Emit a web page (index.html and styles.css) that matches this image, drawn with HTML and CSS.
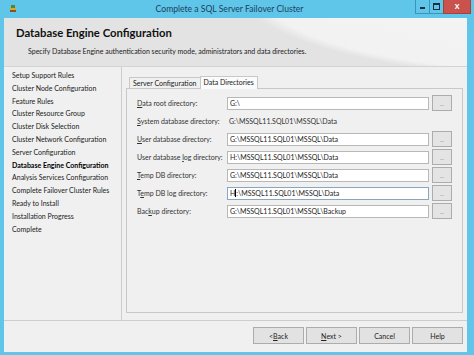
FILE: index.html
```html
<!DOCTYPE html>
<html lang="en">
<head>
  <meta charset="UTF-8">
  <title>Complete a SQL Server Failover Cluster</title>
  <link rel="stylesheet" href="styles.css">
</head>
<body>
  <div class="window">
    <div class="titlebar">
      <svg class="app-icon" width="8" height="9" viewBox="0 0 8 9">
        <rect x="1" y="3" width="6" height="5" fill="#d8a640"/>
        <rect x="2" y="1" width="4" height="3" fill="#4a8a3c"/>
        <rect x="1" y="6" width="6" height="2" fill="#7a5a20"/>
      </svg>
      <div class="title">Complete a SQL Server Failover Cluster</div>
      <div class="caption-buttons">
        <div class="cap-btn"><span class="glyph-min"></span></div>
        <div class="cap-btn"><span class="glyph-max"></span></div>
        <div class="cap-btn close">x</div>
      </div>
    </div>

    <div class="client">
      <div class="header">
        <div class="header-title">Database Engine Configuration</div>
        <div class="header-sub">Specify Database Engine authentication security mode, administrators and data directories.</div>
      </div>

      <div class="main">
        <div class="nav">
          <div class="nav-item">Setup Support Rules</div>
          <div class="nav-item">Cluster Node Configuration</div>
          <div class="nav-item">Feature Rules</div>
          <div class="nav-item">Cluster Resource Group</div>
          <div class="nav-item">Cluster Disk Selection</div>
          <div class="nav-item">Cluster Network Configuration</div>
          <div class="nav-item">Server Configuration</div>
          <div class="nav-item active">Database Engine Configuration</div>
          <div class="nav-item">Analysis Services Configuration</div>
          <div class="nav-item">Complete Failover Cluster Rules</div>
          <div class="nav-item">Ready to Install</div>
          <div class="nav-item">Installation Progress</div>
          <div class="nav-item">Complete</div>
        </div>

        <div class="content">
          <div class="tabs">
            <div class="tab">Server Configuration</div>
            <div class="tab selected">Data Directories</div>
          </div>
          <div class="panel">
            <div class="row">
              <div class="label"><u>D</u>ata root directory:</div>
              <div class="field">G:\</div>
              <div class="browse">...</div>
            </div>
            <div class="row">
              <div class="label"><u>S</u>ystem database directory:</div>
              <div class="value">G:\MSSQL11.SQL01\MSSQL\Data</div>
            </div>
            <div class="row">
              <div class="label"><u>U</u>ser database directory:</div>
              <div class="field">G:\MSSQL11.SQL01\MSSQL\Data</div>
              <div class="browse">...</div>
            </div>
            <div class="row">
              <div class="label">User database <u>l</u>og directory:</div>
              <div class="field">H:\MSSQL11.SQL01\MSSQL\Data</div>
              <div class="browse">...</div>
            </div>
            <div class="row">
              <div class="label"><u>T</u>emp DB directory:</div>
              <div class="field">G:\MSSQL11.SQL01\MSSQL\Data</div>
              <div class="browse">...</div>
            </div>
            <div class="row">
              <div class="label">T<u>e</u>mp DB log directory:</div>
              <div class="field focused">H<span class="caret"></span>:\MSSQL11.SQL01\MSSQL\Data</div>
              <div class="browse">...</div>
            </div>
            <div class="row">
              <div class="label">Bac<u>k</u>up directory:</div>
              <div class="field">G:\MSSQL11.SQL01\MSSQL\Backup</div>
              <div class="browse">...</div>
            </div>
          </div>
        </div>
      </div>

      <div class="footer">
        <div class="btn">&lt; <u>B</u>ack</div>
        <div class="btn"><u>N</u>ext &gt;</div>
        <div class="btn">Cancel</div>
        <div class="btn">Help</div>
      </div>
    </div>
  </div>
</body>
</html>
```

FILE: styles.css
```css
html,
body {
  margin: 0;
  width: 100%;
  height: 100%;
}

body {
  font-family: Lato, "Liberation Sans", sans-serif;
  color: #1a1a1a;
  background-color: #5fc6ea;
}

.window {
  width: 474px;
  height: 355px;
  box-sizing: border-box;
  padding: 0 7px 3px 4px;
  background-color: #5fc6ea;
  display: flex;
  flex-direction: column;
}

.titlebar {
  height: 18px;
  display: flex;
  align-items: center;
}

.app-icon {
  margin: 0 0 2px 5px;
}

.title {
  flex: 1;
  text-align: center;
  font-size: 8.6px;
  color: #1d3f5e;
  padding-left: 26px;
  padding-bottom: 1px;
  white-space: nowrap;
}

.caption-buttons {
  align-self: flex-start;
  display: flex;
  height: 14px;
  margin-right: -4px;
}

.cap-btn {
  width: 15px;
  height: 14px;
  box-sizing: border-box;
  border: 1px solid #3f93b4;
  border-top: none;
  margin-left: -1px;
  display: flex;
  justify-content: center;
  align-items: center;
}

.glyph-min {
  width: 5px;
  height: 2px;
  background-color: #1d2d3a;
  margin-top: 3px;
}

.glyph-max {
  width: 5px;
  height: 4px;
  border: 1px solid #1d2d3a;
  border-top-width: 2px;
}

.cap-btn.close {
  width: 28px;
  background-color: #c9524c;
  border-color: #a8403a;
  color: #fff;
  font-size: 9px;
  font-weight: bold;
  line-height: 1;
  padding-bottom: 2px;
}

.client {
  flex: 1;
  background-color: #f0f0f0;
  display: flex;
  flex-direction: column;
}

.header {
  height: 49px;
  box-sizing: border-box;
  border-bottom: 1px solid #d4d4d4;
  padding: 8px 0 0 12px;
  white-space: nowrap;
  background:
    radial-gradient(ellipse 326px 89px at 560px -30px, #f5f5f5 0%, #f2f2f2 94%, #e3e3e3 100%),
    linear-gradient(90deg, #dcdcdc 0%, #e2e2e2 100%);
}

.header-title {
  font-size: 11.3px;
  font-weight: bold;
  color: #111;
  line-height: 14px;
}

.header-sub {
  font-size: 7px;
  margin: 7px 0 0 12px;
  color: #222;
}

.main {
  flex: 1;
  display: flex;
}

.nav {
  width: 118px;
  border-right: 1px solid #cdcdcd;
  padding: 2px 0 0 8px;
  box-sizing: border-box;
}

.nav-item {
  font-size: 7px;
  height: 12.8px;
  line-height: 12.8px;
  white-space: nowrap;
  color: #222;
}

.nav-item.active {
  font-weight: bold;
  color: #000;
}

.content {
  flex: 1;
  display: flex;
  flex-direction: column;
  padding: 8px 4px 7px 4px;
}

.tabs {
  display: flex;
  align-items: flex-end;
  padding-left: 3px;
  height: 13px;
  position: relative;
  z-index: 1;
}

.tab {
  font-size: 7px;
  height: 10px;
  line-height: 10px;
  padding: 0 3px;
  border: 1px solid #c8c8c8;
  border-bottom: none;
  background-color: #f0f0f0;
  white-space: nowrap;
}

.tab.selected {
  height: 12px;
  line-height: 11px;
  background-color: #fbfbfb;
  margin-left: -1px;
  margin-bottom: -1px;
}

.panel {
  flex: 1;
  border: 1px solid #c8c8c8;
  background-color: #f0f0f0;
  padding: 5px 9px 0 10px;
  display: flex;
  flex-direction: column;
}

.row {
  height: 18px;
  display: flex;
  align-items: center;
}

.label {
  width: 90px;
  font-size: 7px;
  white-space: nowrap;
  color: #333;
}

.field {
  width: 202px;
  height: 13px;
  box-sizing: border-box;
  border: 1px solid #b8b8b8;
  background-color: #fff;
  font-size: 7px;
  line-height: 11px;
  padding-left: 2px;
  color: #222;
  white-space: nowrap;
}

.field.focused {
  border-color: #8aa7c2;
}

.caret {
  display: inline-block;
  width: 1px;
  height: 8px;
  background-color: #000;
  vertical-align: -1px;
}

.value {
  font-size: 7px;
  padding-left: 2px;
  color: #333;
}

.browse {
  width: 20px;
  height: 16px;
  box-sizing: border-box;
  margin-left: 3px;
  border: 1px solid #acacac;
  background-color: #e4e4e4;
  font-size: 6px;
  color: #888;
  display: flex;
  justify-content: center;
  align-items: center;
}

.footer {
  height: 32px;
  box-sizing: border-box;
  border-top: 1px solid #cdcdcd;
  display: flex;
  justify-content: flex-end;
  align-items: flex-start;
  padding: 6px 4px 0 0;
  gap: 2px;
}

.btn {
  width: 51px;
  height: 17px;
  box-sizing: border-box;
  border: 1px solid #acacac;
  background-color: #e2e2e2;
  font-size: 7px;
  color: #222;
  display: flex;
  justify-content: center;
  align-items: center;
}
```
